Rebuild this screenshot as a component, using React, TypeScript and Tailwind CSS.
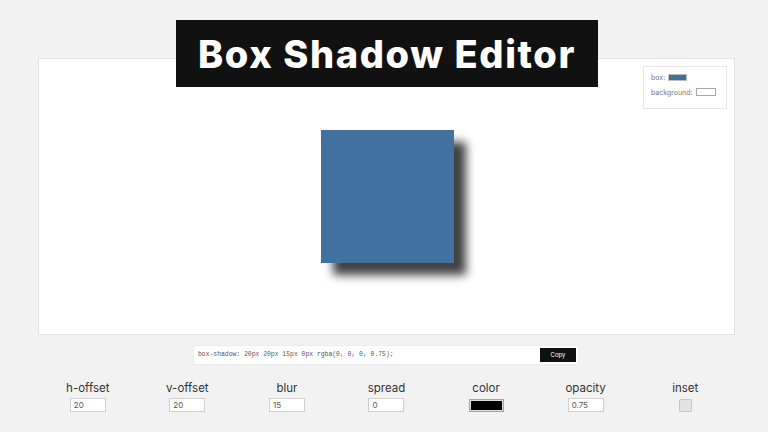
import React from "react";

const controls = [
  { label: "h-offset", kind: "text", value: "20" },
  { label: "v-offset", kind: "text", value: "20" },
  { label: "blur", kind: "text", value: "15" },
  { label: "spread", kind: "text", value: "0" },
  { label: "color", kind: "color", value: "" },
  { label: "opacity", kind: "text", value: "0.75" },
  { label: "inset", kind: "check", value: "" },
];

export default function App() {
  return (
    <div
      className="relative w-[768px] h-[432px] bg-[#f2f2f2] overflow-hidden"
      style={{ fontFamily: "Inter, 'Open Sans', sans-serif" }}
    >
      {/* title banner */}
      <div className="absolute left-[176px] top-[20px] w-[422px] h-[67px] bg-[#111111] flex items-center justify-center z-10">
        <span className="text-white text-[38px] font-extrabold tracking-[1.6px] leading-none">
          Box Shadow Editor
        </span>
      </div>

      <div className="flex flex-col pl-[38px] pt-[58px] w-[735px]">
        {/* preview area */}
        <div className="relative h-[277px] bg-white border border-[#e3e3e3] flex justify-center pt-[71px]">
          <div className="w-[133px] h-[133px] bg-[#41719f] shadow-[12px_12px_9px_rgba(0,0,0,0.75)] ml-[1px]" />
          <div className="absolute right-[7px] top-[7px] w-[84px] h-[43px] bg-white border border-[#e6e6e6] flex flex-col gap-[7px] pl-[7px] pt-[7px] text-[7px] text-[#777]">
            <div className="flex items-center gap-[3px] leading-none">
              <span>box:</span>
              <span className="w-[19px] h-[7px] bg-[#41719f] border border-[#bbb]" />
            </div>
            <div className="flex items-center gap-[3px] leading-none">
              <span>background:</span>
              <span className="w-[20px] h-[8px] bg-white border border-[#aaa]" />
            </div>
          </div>
        </div>

        {/* css output */}
        <div className="flex justify-center mt-[10px] pr-[1px]">
          <div className="w-[386px] h-[20px] bg-white border border-[#ececec] flex items-center justify-between pl-[4px] pr-[2px]">
            <span
              className="text-[6.4px] text-[#555] whitespace-pre"
              style={{ fontFamily: "'Liberation Mono', monospace" }}
            >
              box-shadow: 20px 20px 15px 0px rgba(0, 0, 0, 0.75);
            </span>
            <button className="w-[36px] h-[14px] bg-[#111] text-white text-[6px] leading-none">Copy</button>
          </div>
        </div>

        {/* controls */}
        <div className="grid grid-cols-7 mt-[16px]">
          {controls.map((c) => (
            <div key={c.label} className="flex flex-col items-center">
              <span className="text-[11.5px] text-[#333] leading-[14px]">{c.label}</span>
              <div className="mt-[3px] h-[14px] flex items-center">
                {c.kind === "text" && (
                  <div className="w-[36px] h-[14px] bg-white border border-[#cfcfcf] text-[8px] text-[#555] pl-[3px] leading-[12px]">
                    {c.value}
                  </div>
                )}
                {c.kind === "color" && (
                  <div className="w-[35px] h-[13px] bg-[#dcdcdc] border border-[#a5a5a5] p-[1px]">
                    <div className="w-full h-full bg-black" />
                  </div>
                )}
                {c.kind === "check" && (
                  <div className="w-[13px] h-[13px] bg-[#e2e2e2] border border-[#c6c6c6] rounded-[1px]" />
                )}
              </div>
            </div>
          ))}
        </div>
      </div>
    </div>
  );
}
